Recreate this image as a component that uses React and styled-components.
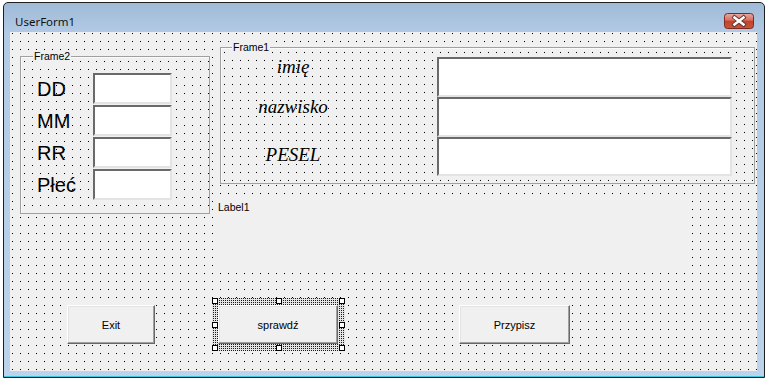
import React from 'react';
import styled, { createGlobalStyle } from 'styled-components';

const GlobalStyle = createGlobalStyle`
  html, body {
    margin: 0;
    padding: 0;
    background: #ffffff;
  }
  body {
    font-family: "Liberation Sans", Arial, sans-serif;
  }
`;

// designer grid: crisp 1px dots every 8px
const dots = (x, y) => `
  background-color: #000;
  background-image:
    linear-gradient(90deg, transparent 1px, #f0f0f0 1px),
    linear-gradient(180deg, transparent 1px, #f0f0f0 1px);
  background-size: 8px 8px;
  background-position: ${x}px ${y}px;
`;

const Window = styled.div`
  margin: 2px 0 0 3px;
  width: 762px;
  height: 376px;
  box-sizing: border-box;
  border: 1px solid #1e1e1e;
  border-radius: 5px 5px 0 0;
  background: linear-gradient(180deg, #9fbad8 0px, #b2cae4 30px, #bcd3eb 100%);
  box-shadow: inset 0 -1px 0 #3fc6e0;
  display: flex;
  flex-direction: column;
`;

const TitleBar = styled.div`
  height: 29px;
  display: flex;
  align-items: flex-start;
  justify-content: space-between;
  padding: 0 10px 0 11px;
`;

const Title = styled.span`
  margin-top: 12px;
  font-family: "Noto Sans", "Open Sans", sans-serif;
  font-size: 11.5px;
  line-height: 14px;
  color: #111;
`;

const CloseButton = styled.div`
  margin-top: 10px;
  width: 30px;
  height: 16px;
  display: flex;
`;

const Body = styled.div`
  flex: 1;
  padding: 0 7px 6px 6px;
  display: flex;
`;

const Client = styled.div`
  width: 747px;
  height: 339px;
  ${dots(2, 1)}
  display: flex;
  flex-direction: column;
`;

const TopArea = styled.div`
  display: flex;
  align-items: flex-start;
`;

const RightColumn = styled.div`
  margin-left: 3px;
  display: flex;
  flex-direction: column;
`;

const Frame = styled.div`
  position: relative;
  box-sizing: border-box;
  margin: ${p => p.$margin};
  width: ${p => p.$w}px;
  height: ${p => p.$h}px;
  border: 1px solid #a0a0a0;
  box-shadow: inset 1px 1px 0 #fbfbfb;
  ${dots(3, 4)}
`;

const Legend = styled.span`
  position: absolute;
  top: -7px;
  left: ${p => p.$left}px;
  padding: 0 1px;
  background: #f0f0f0;
  font-size: 10.5px;
  line-height: 12px;
  color: #000;
`;

const SmallGrid = styled.div`
  display: grid;
  grid-template-columns: 56px 79px;
  grid-auto-rows: 31px;
  row-gap: 1px;
  padding: 16px 0 0 16px;
`;

const BigLabel = styled.span`
  align-self: center;
  font-family: "Liberation Sans", Arial, sans-serif;
  font-size: 20px;
  line-height: 22px;
  color: #000;
`;

const TextBox = styled.div`
  box-sizing: border-box;
  background: #fff;
  border-style: solid;
  border-width: 2px;
  border-color: #6a6a6a #e3e3e3 #e3e3e3 #6a6a6a;
  height: ${p => p.$h || 31}px;
`;

const WideGrid = styled.div`
  display: grid;
  grid-template-columns: 144px 295px;
  column-gap: 72px;
  grid-template-rows: 40px 40px 39px;
  padding: 9px 0 0 0;
`;

const ItalicLabel = styled.span`
  align-self: start;
  justify-self: center;
  margin-top: ${p => p.$top}px;
  font-family: "Liberation Serif", "Times New Roman", serif;
  font-style: italic;
  font-size: 19px;
  line-height: 22px;
  color: #000;
`;

const LabelArea = styled.div`
  margin-top: 11px;
  width: 475px;
  height: 75px;
  box-sizing: border-box;
  background: #f0f0f0;
  padding: 6px 5px;
  font-size: 10.5px;
  line-height: 13px;
  color: #000;
`;

const ButtonRow = styled.div`
  margin-top: 28px;
  padding-left: 57px;
  height: 53px;
  display: flex;
  align-items: center;
`;

const Button = styled.div`
  box-sizing: border-box;
  margin-left: ${p => p.$ml || 0}px;
  width: ${p => p.$w}px;
  height: 39px;
  background: #f0f0f0;
  border: 1px solid;
  border-color: #ffffff #696969 #696969 #ffffff;
  box-shadow: inset -1px -1px 0 #a0a0a0, inset 1px 1px 0 #e3e3e3;
  display: flex;
  align-items: center;
  justify-content: center;
  font-size: 11px;
  color: #000;
`;

const Selection = styled.div`
  position: relative;
  margin-left: ${p => p.$ml}px;
  width: 133px;
  height: 53px;
  box-sizing: border-box;
  padding: 7px 7px 7px 6px;
  background: conic-gradient(#1a1a1a 0 25%, #e4e4e4 0 100%) 0 0 / 2px 2px;
`;

const Handle = styled.span`
  position: absolute;
  width: 6px;
  height: 6px;
  box-sizing: border-box;
  background: #fff;
  border: 1px solid #000;
  left: ${p => (p.$x === 'l' ? '0' : p.$x === 'c' ? 'calc(50% - 3px)' : 'auto')};
  right: ${p => (p.$x === 'r' ? '0' : 'auto')};
  top: ${p => (p.$y === 't' ? '0' : p.$y === 'm' ? 'calc(50% - 3px)' : 'auto')};
  bottom: ${p => (p.$y === 'b' ? '0' : 'auto')};
`;

function CloseIcon() {
  return (
    <svg width="30" height="16" viewBox="0 0 30 16">
      <defs>
        <linearGradient id="cls" x1="0" y1="0" x2="0" y2="1">
          <stop offset="0" stopColor="#e9a99f" />
          <stop offset="0.45" stopColor="#d7705f" />
          <stop offset="0.5" stopColor="#c4422b" />
          <stop offset="1" stopColor="#c8553b" />
        </linearGradient>
      </defs>
      <rect x="0.5" y="0.5" width="29" height="15" rx="3" fill="url(#cls)" stroke="#7d2a20" />
      <path d="M10.5 4.5 L19.5 11.5 M19.5 4.5 L10.5 11.5" stroke="#5a3030" strokeWidth="4.2" strokeLinecap="square" />
      <path d="M10.5 4.5 L19.5 11.5 M19.5 4.5 L10.5 11.5" stroke="#ffffff" strokeWidth="2.6" strokeLinecap="square" />
    </svg>
  );
}

const dateFields = ['DD', 'MM', 'RR', 'Płeć'];
const personFields = [
  { label: 'imię', top: -1, h: 40 },
  { label: 'nazwisko', top: -1, h: 40 },
  { label: 'PESEL', top: 7, h: 39 },
];

export default function App() {
  return (
    <>
      <GlobalStyle />
      <Window>
        <TitleBar>
          <Title>UserForm1</Title>
          <CloseButton>
            <CloseIcon />
          </CloseButton>
        </TitleBar>
        <Body>
          <Client>
            <TopArea>
              <Frame $margin="24px 0 0 10px" $w={190} $h={158}>
                <Legend $left={12}>Frame2</Legend>
                <SmallGrid>
                  {dateFields.map(f => (
                    <React.Fragment key={f}>
                      <BigLabel>{f}</BigLabel>
                      <TextBox />
                    </React.Fragment>
                  ))}
                </SmallGrid>
              </Frame>
              <RightColumn>
                <Frame $margin="15px 0 0 7px" $w={535} $h={137}>
                  <Legend $left={11}>Frame1</Legend>
                  <WideGrid>
                    {personFields.map(f => (
                      <React.Fragment key={f.label}>
                        <ItalicLabel $top={f.top}>{f.label}</ItalicLabel>
                        <TextBox $h={f.h} />
                      </React.Fragment>
                    ))}
                  </WideGrid>
                </Frame>
                <LabelArea>Label1</LabelArea>
              </RightColumn>
            </TopArea>
            <ButtonRow>
              <Button $w={88}>Exit</Button>
              <Selection $ml={57}>
                <Button $w={120}>sprawdź</Button>
                <Handle $x="l" $y="t" />
                <Handle $x="c" $y="t" />
                <Handle $x="r" $y="t" />
                <Handle $x="l" $y="m" />
                <Handle $x="r" $y="m" />
                <Handle $x="l" $y="b" />
                <Handle $x="c" $y="b" />
                <Handle $x="r" $y="b" />
              </Selection>
              <Button $w={111} $ml={114}>Przypisz</Button>
            </ButtonRow>
          </Client>
        </Body>
      </Window>
    </>
  );
}
